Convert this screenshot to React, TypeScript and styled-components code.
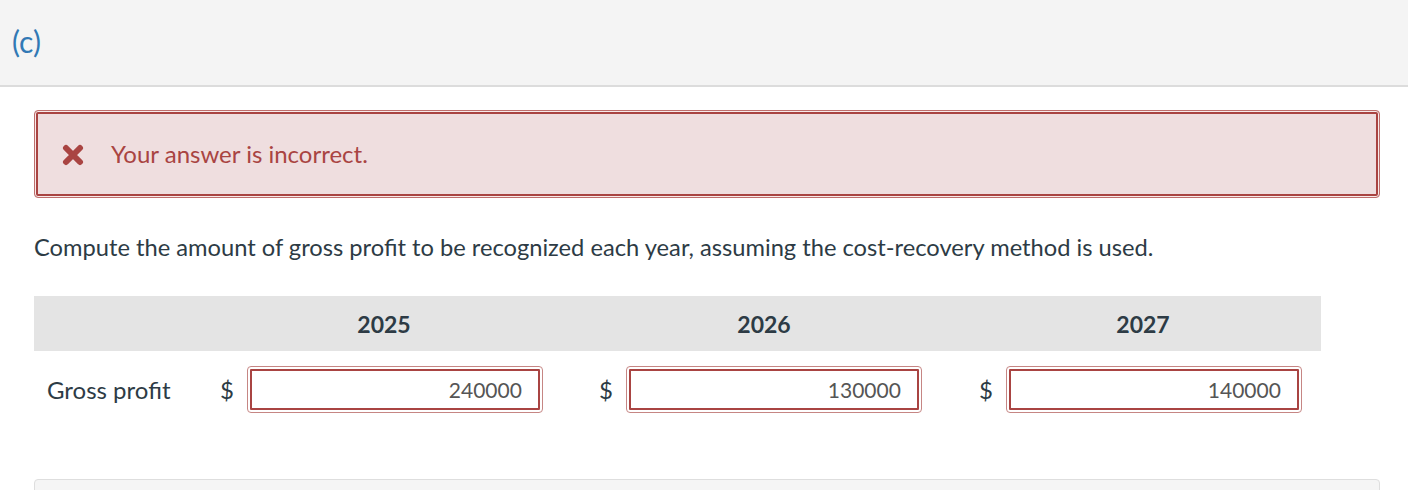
import styled, { createGlobalStyle } from 'styled-components'

const GlobalStyle = createGlobalStyle`
  body {
    margin: 0;
    background: #fff;
    font-family: Lato, 'Open Sans', sans-serif;
    color: #2d3b45;
  }
`

const YEARS = ['2025', '2026', '2027']
const VALUES = ['240000', '130000', '140000']

const XIcon = () => (
  <svg width="22" height="22" viewBox="0 0 22 22">
    <path
      d="M4 4 L18 18 M18 4 L4 18"
      stroke="#a94442"
      strokeWidth="6"
      strokeLinecap="round"
    />
  </svg>
)

const App = () => {
  return (
    <>
      <GlobalStyle />
      <Header>
        <PartLabel>(c)</PartLabel>
      </Header>
      <Content>
        <Alert>
          <XIcon />
          <AlertText>Your answer is incorrect.</AlertText>
        </Alert>
        <Question>
          Compute the amount of gross profit to be recognized each year, assuming the
          cost-recovery method is used.
        </Question>
        <Table>
          <HeadRow>
            <HeadCell />
            {YEARS.map((year, i) => (
              <HeadCell key={year} shift={i === 2 ? 11 : 0}>
                {year}
              </HeadCell>
            ))}
          </HeadRow>
          <BodyRow>
            <RowLabel>Gross profit</RowLabel>
            {VALUES.map((value, i) => (
              <InputCell key={i} first={i === 0}>
                <Dollar>$</Dollar>
                <AnswerInput readOnly value={value} />
              </InputCell>
            ))}
          </BodyRow>
        </Table>
        <NextPanel />
      </Content>
    </>
  )
}

export default App

const Header = styled.header`
  height: 85px;
  background: #f4f4f4;
  border-bottom: 2px solid #dcdcdc;
  display: flex;
  align-items: center;
  padding-left: 12px;
`

const PartLabel = styled.span`
  font-size: 30px;
  color: #3179b5;
  margin-top: -4px;
`

const Content = styled.main`
  padding: 23px 28px 0 34px;
`

const Alert = styled.div`
  height: 88px;
  box-sizing: border-box;
  border: 1px solid #bd6f6d;
  border-radius: 4px;
  background: #efdedf;
  box-shadow: inset 0 0 0 1px #f8eaea, inset 0 0 0 3px #a94442;
  display: flex;
  align-items: center;
  padding-left: 27px;
  gap: 27px;
  svg {
    margin-top: 1px;
  }
`

const AlertText = styled.span`
  font-size: 24px;
  color: #a94442;
  margin-top: -2px;
`

const Question = styled.p`
  margin: 35px 0 0;
  font-size: 23.7px;
  line-height: 28px;
  color: #2d3b45;
`

const Table = styled.div`
  width: 1287px;
  margin-top: 35px;
`

const HeadRow = styled.div`
  display: grid;
  grid-template-columns: 160px 380px 380px 367px;
  height: 55px;
  background: #e4e4e4;
  align-items: center;
`

const HeadCell = styled.div<{ shift?: number }>`
  text-align: center;
  font-size: 23px;
  font-weight: 700;
  color: #2d3b45;
  padding-left: ${(p) => p.shift ?? 0}px;
`

const BodyRow = styled.div`
  display: grid;
  grid-template-columns: 160px 380px 380px 367px;
  height: 80px;
  align-items: center;
  margin-top: -2px;
`

const RowLabel = styled.div`
  padding-left: 13px;
  font-size: 24px;
  color: #2d3b45;
`

const InputCell = styled.div<{ first?: boolean }>`
  display: flex;
  align-items: center;
  padding-left: ${(p) => (p.first ? 26 : 25)}px;
  gap: 16px;
`

const Dollar = styled.span`
  font-size: 24px;
  color: #2d3b45;
`

const AnswerInput = styled.input`
  flex: none;
  width: 290px;
  height: 41px;
  box-sizing: border-box;
  border: 2px solid #a94442;
  outline: 1px solid #c68684;
  outline-offset: 2px;
  border-radius: 1px;
  background: #fff;
  text-align: right;
  padding: 0 16px 0 8px;
  font-family: Lato, 'Open Sans', sans-serif;
  font-size: 21px;
  color: #555;
`

const NextPanel = styled.div`
  margin-top: 50px;
  height: 30px;
  border: 1px solid #dedede;
  border-radius: 4px;
  background: #f5f5f5;
`
